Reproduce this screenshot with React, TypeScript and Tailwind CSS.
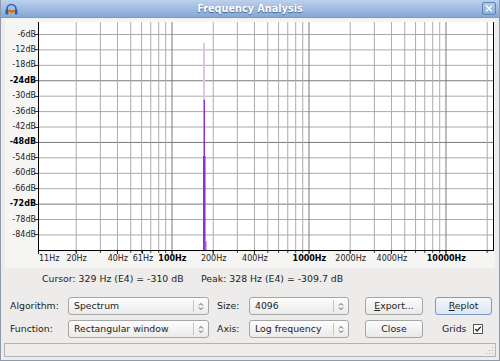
import type { ReactNode } from "react";

const FMIN = 10.77;
// x inside the plot (page x - 39)
const xf = (f: number) => 0.4 + 137 * Math.log10(f / FMIN);
// y inside the plot (page y - 22) for -6 * k dB
const yk = (k: number) => 12.5 + (k - 1) * 15.42;

const gridFreqs: number[] = [];
for (const dec of [10, 100, 1000, 10000]) {
  for (let m = 1; m <= 9; m++) {
    const f = m * dec;
    if (f > FMIN && f < 22050) gridFreqs.push(f);
  }
}
const majorFreqs = [100, 1000, 10000];
const levels = Array.from({ length: 14 }, (_, i) => i + 1);

const xLabels = [
  { t: "20Hz", f: 20 },
  { t: "40Hz", f: 40 },
  { t: "61Hz", f: 61 },
  { t: "100Hz", f: 100, bold: true },
  { t: "200Hz", f: 200 },
  { t: "400Hz", f: 400 },
  { t: "1000Hz", f: 1000, bold: true },
  { t: "2000Hz", f: 2000 },
  { t: "4000Hz", f: 4000 },
  { t: "10000Hz", f: 10000, bold: true },
];

function AppIcon() {
  return (
    <svg width="13" height="12" viewBox="0 0 13 12">
      <path d="M2 8 V6 A4.5 4.5 0 0 1 11 6 V8" fill="none" stroke="#2d5fb3" strokeWidth="1.6" />
      <rect x="0.5" y="6.5" width="3" height="5" rx="1" fill="#2d5fb3" />
      <rect x="9.5" y="6.5" width="3" height="5" rx="1" fill="#2d5fb3" />
      <rect x="3.5" y="7" width="6" height="3" fill="#f0a030" />
      <path d="M3.5 8.5 L5 7.2 L6.5 9.6 L8 7.4 L9.5 8.5" fill="none" stroke="#d42a1e" strokeWidth="1" />
    </svg>
  );
}

function TitleBar() {
  return (
    <div className="grid h-[18px] grid-cols-[1fr_auto_1fr] items-center border-b border-[#7b9ccb] bg-linear-to-b from-[#bcd1ed] to-[#86a8d6]">
      <div className="pl-[4px]">
        <AppIcon />
      </div>
      <div className="text-[9.7px] leading-none font-bold text-white [text-shadow:0_1px_1px_#3d5f8f]">
        Frequency Analysis
      </div>
      <div className="flex justify-end pr-[3px]">
        <div className="flex h-[13px] w-[14px] items-center justify-center rounded-[2px] border border-[#5f84b8] bg-linear-to-b from-[#b1caea] to-[#8eaed9]">
          <svg width="8" height="7" viewBox="0 0 8 7">
            <path d="M1 0.5 L7 6.5 M7 0.5 L1 6.5" stroke="white" strokeWidth="1.4" />
          </svg>
        </div>
      </div>
    </div>
  );
}

function YLabels() {
  return (
    <div className="relative h-[229px] w-[33px] text-[8px] leading-[10px]">
      {levels.map((k) => {
        const y = yk(k);
        const bold = k % 4 === 0;
        return (
          <div key={k}>
            <span
              className={bold ? "absolute right-[2px] font-bold text-black" : "absolute right-[2px] text-[#222]"}
              style={{ top: y - 5 }}
            >
              -{k * 6}dB
            </span>
            <div className="absolute right-0 h-px w-[4px] bg-[#333]" style={{ top: Math.floor(y) }} />
          </div>
        );
      })}
    </div>
  );
}

function Plot() {
  return (
    <div className="h-[229px] w-[456px] border-x border-b border-black bg-white">
      <svg width="454" height="228" viewBox="0 0 454 228" className="block">
        {levels.map((k) => (
          <line
            key={k}
            x1="0"
            x2="454"
            y1={yk(k)}
            y2={yk(k)}
            stroke={k % 4 === 0 ? "#7a7a7a" : "#ababab"}
            strokeWidth="1"
          />
        ))}
        {gridFreqs.map((f) => (
          <line
            key={f}
            x1={xf(f)}
            x2={xf(f)}
            y1="0"
            y2="228"
            stroke={majorFreqs.includes(f) ? "#7a7a7a" : "#ababab"}
            strokeWidth="1"
          />
        ))}
        <rect x="164" y="21" width="2" height="58" fill="#dbc6ee" />
        <rect x="164.5" y="78" width="1.5" height="56" fill="#8a30cc" />
        <rect x="164" y="134" width="2.5" height="94" fill="#8a30cc" />
        <rect x="165.5" y="219" width="2" height="9" fill="#a35fdc" />
      </svg>
    </div>
  );
}

function XLabels() {
  return (
    <div className="relative h-[17px] text-[8px] leading-[10px] text-[#222]">
      <svg width="456" height="4" className="absolute top-0 left-[33px]">
        <line x1="0.5" x2="0.5" y1="0" y2="3" stroke="#222" />
        {gridFreqs.map((f) => (
          <line key={f} x1={xf(f) + 1} x2={xf(f) + 1} y1="0" y2="2" stroke="#444" />
        ))}
        {xLabels.map((l) => (
          <line key={l.t} x1={xf(l.f) + 1} x2={xf(l.f) + 1} y1="0" y2="3" stroke="#222" />
        ))}
      </svg>
      <span className="absolute top-[3px] left-[34px]">11Hz</span>
      {xLabels.map((l) => (
        <span
          key={l.t}
          className={l.bold ? "absolute top-[3px] -translate-x-1/2 font-bold text-black" : "absolute top-[3px] -translate-x-1/2"}
          style={{ left: 34.4 + xf(l.f) }}
        >
          {l.t}
        </span>
      ))}
    </div>
  );
}

function UpDown() {
  return (
    <svg width="6" height="9" viewBox="0 0 6 9">
      <path d="M1 3.5 L3 1.5 L5 3.5 M1 5.5 L3 7.5 L5 5.5" fill="none" stroke="#555" strokeWidth="1" />
    </svg>
  );
}

function Select({ value, w }: { value: string; w: string }) {
  return (
    <div className={`flex h-[18px] ${w} items-center rounded-[3px] border border-[#a6a6a6] bg-linear-to-b from-[#fdfdfd] to-[#ebebeb]`}>
      <span className="flex-1 pl-[5px]">{value}</span>
      <div className="h-[12px] w-px bg-[#c4c4c4]" />
      <div className="flex w-[14px] justify-center">
        <UpDown />
      </div>
    </div>
  );
}

function Button({ children, w, def }: { children: ReactNode; w: string; def?: boolean }) {
  return (
    <div
      className={
        def
          ? `flex h-[18px] ${w} items-center justify-center rounded-[3px] border border-[#7a9bc8] bg-linear-to-b from-[#f4f7fb] to-[#dfe6f0]`
          : `flex h-[18px] ${w} items-center justify-center rounded-[3px] border border-[#a6a6a6] bg-linear-to-b from-[#fcfcfc] to-[#e9e9e9]`
      }
    >
      {children}
    </div>
  );
}

function Checkbox() {
  return (
    <svg width="10" height="10" viewBox="0 0 10 10">
      <rect x="0.5" y="0.5" width="9" height="9" fill="white" stroke="#555" />
      <path d="M2.3 5 L4.2 7 L7.8 2.6" fill="none" stroke="#222" strokeWidth="1.3" />
    </svg>
  );
}

function Grip() {
  const dots = [
    [7, 1],
    [7, 4],
    [4, 4],
    [7, 7],
    [4, 7],
    [1, 7],
  ];
  return (
    <svg width="9" height="9" className="absolute right-[1px] bottom-[1px]">
      {dots.map(([x, y]) => (
        <rect key={`${x}-${y}`} x={x} y={y} width="1" height="1" fill="#a8a8a8" />
      ))}
    </svg>
  );
}

export default function App() {
  return (
    <div className="flex h-[361px] w-[500px] flex-col overflow-hidden border-x border-b border-[#8e9aab] bg-[#edecea] font-['DejaVu_Sans',sans-serif] text-[#222]">
      <TitleBar />
      <div className="mt-[1px] ml-[4px] flex h-[249px] w-[490px] flex-col bg-[#f5f5f4]">
        <div className="flex pt-[3px]">
          <YLabels />
          <Plot />
        </div>
        <XLabels />
      </div>

      <div className="mt-[4px] flex h-[14px] items-center pl-[41px] text-[9.33px] leading-none">
        <span className="w-[159px]">Cursor: 329 Hz (E4) = -310 dB</span>
        <span>Peak: 328 Hz (E4) = -309.7 dB</span>
      </div>

      <div className="mt-[11px] flex flex-col gap-[5px] pl-[9px] text-[9.33px] leading-none">
        <div className="flex items-center">
          <span className="w-[58px]">Algorithm:</span>
          <Select value="Spectrum" w="w-[141px]" />
          <span className="w-[40px] pl-[8px]">Size:</span>
          <Select value="4096" w="w-[100px]" />
          <div className="ml-[16px]">
            <Button w="w-[58px]">
              <span>
                <span className="underline">E</span>xport...
              </span>
            </Button>
          </div>
          <div className="ml-[12px]">
            <Button w="w-[57px]" def>
              <span>
                <span className="underline">R</span>eplot
              </span>
            </Button>
          </div>
        </div>
        <div className="flex items-center">
          <span className="w-[58px]">Function:</span>
          <Select value="Rectangular window" w="w-[141px]" />
          <span className="w-[40px] pl-[8px]">Axis:</span>
          <Select value="Log frequency" w="w-[100px]" />
          <div className="ml-[16px]">
            <Button w="w-[58px]">Close</Button>
          </div>
          <div className="ml-[12px] flex w-[57px] items-center gap-[7px] pl-[7px]">
            <span>Grids</span>
            <Checkbox />
          </div>
        </div>
      </div>

      <div className="relative mt-[5px] ml-[3px] h-[14px] w-[492px] border border-[#b2b2b2] bg-[#eeedeb]">
        <Grip />
      </div>
    </div>
  );
}
